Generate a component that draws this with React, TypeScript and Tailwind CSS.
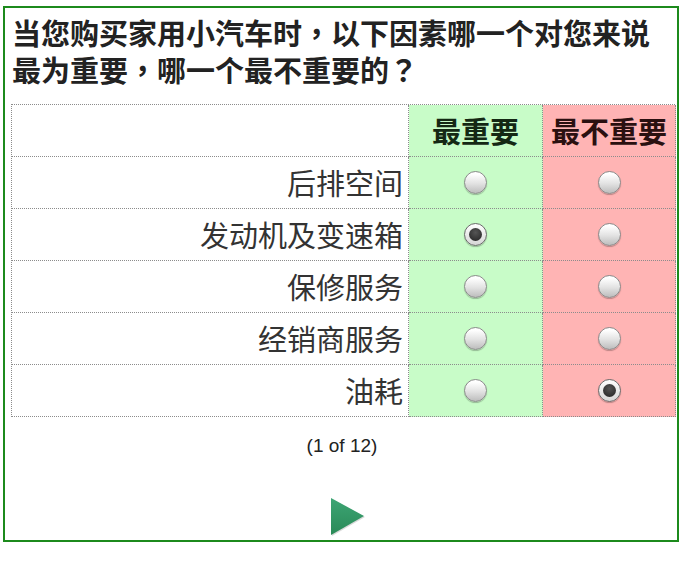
import React from "react";

const cjk = { fontFamily: '"Noto Sans CJK SC", "Noto Sans", sans-serif' };
const tc = { fontFamily: '"Noto Sans CJK TC", "Noto Sans CJK SC", sans-serif' };

function Radio({ checked }: { checked?: boolean }) {
  if (checked) {
    return (
      <div className="w-[23px] h-[23px] rounded-full border border-[#6a6a6a] bg-[linear-gradient(to_bottom,#ffffff,#d6d6d6)] flex items-center justify-center shadow-[0_1px_1px_rgba(0,0,0,0.25)]">
        <div className="w-[13px] h-[13px] rounded-full bg-[radial-gradient(circle_at_50%_35%,#555,#222)]" />
      </div>
    );
  }
  return (
    <div className="w-[23px] h-[23px] rounded-full border border-[#8a8a8a] bg-[linear-gradient(to_bottom,#ffffff_10%,#e2e2e2_55%,#bdbdbd)] shadow-[0_1px_1px_rgba(0,0,0,0.25)]" />
  );
}

const rows: { label: string; most?: boolean; least?: boolean }[] = [
  { label: "后排空间" },
  { label: "发动机及变速箱", most: true },
  { label: "保修服务" },
  { label: "经销商服务" },
  { label: "油耗", least: true },
];

export default function App() {
  const cell = "border-r border-b border-dotted border-[#8c8c8c] h-[52px] flex items-center";
  return (
    <div className="w-[690px] h-[576px] bg-white pt-[6px] pl-[3px]">
      <div className="w-[676px] h-[536px] border-2 border-[#1c8a1c] bg-white flex flex-col">
        <div
          className="ml-[7px] mt-[6px] text-[29px] leading-[37px] font-bold text-[#222]"
          style={cjk}
        >
          当您购买家用小汽车时<span style={tc}>，</span>以下因素哪一个对您来说
          <br />
          最为重要<span style={tc}>，</span>哪一个最不重要的<span style={tc}>？</span>
        </div>
        <div className="ml-[6px] mt-[16px] w-[664px] grid grid-cols-[397px_134px_133px] border-l border-t border-dotted border-[#8c8c8c]" style={cjk}>
          <div className={cell} />
          <div className={`${cell} justify-center bg-[#c8fcc8] text-[29px] font-bold text-[#142814]`}>最重要</div>
          <div className={`${cell} justify-center bg-[#ffb4b4] text-[29px] font-bold text-[#2a1010]`}>最不重要</div>
          {rows.map((r) => (
            <React.Fragment key={r.label}>
              <div className={`${cell} justify-end pr-[5px] text-[29px] text-[#333]`}>{r.label}</div>
              <div className={`${cell} justify-center bg-[#c8fcc8]`}>
                <Radio checked={r.most} />
              </div>
              <div className={`${cell} justify-center bg-[#ffb4b4]`}>
                <Radio checked={r.least} />
              </div>
            </React.Fragment>
          ))}
        </div>
        <div
          className="mt-[18px] text-center text-[19px] leading-[22px] text-[#222] pl-[2px]"
          style={{ fontFamily: '"Liberation Sans", Arial, sans-serif' }}
        >
          (1 of 12)
        </div>
        <div className="mt-[40px] flex justify-center pl-[14px]">
          <svg width="36" height="40" viewBox="0 0 36 40">
            <defs>
              <linearGradient id="tri" x1="0" y1="0" x2="0" y2="1">
                <stop offset="0" stopColor="#3da574" />
                <stop offset="1" stopColor="#2a8a58" />
              </linearGradient>
            </defs>
            <polygon points="2,2 35,20 2,39" fill="#000" opacity="0.15" />
            <polygon points="1,1 34,19 1,38" fill="url(#tri)" />
          </svg>
        </div>
      </div>
    </div>
  );
}
